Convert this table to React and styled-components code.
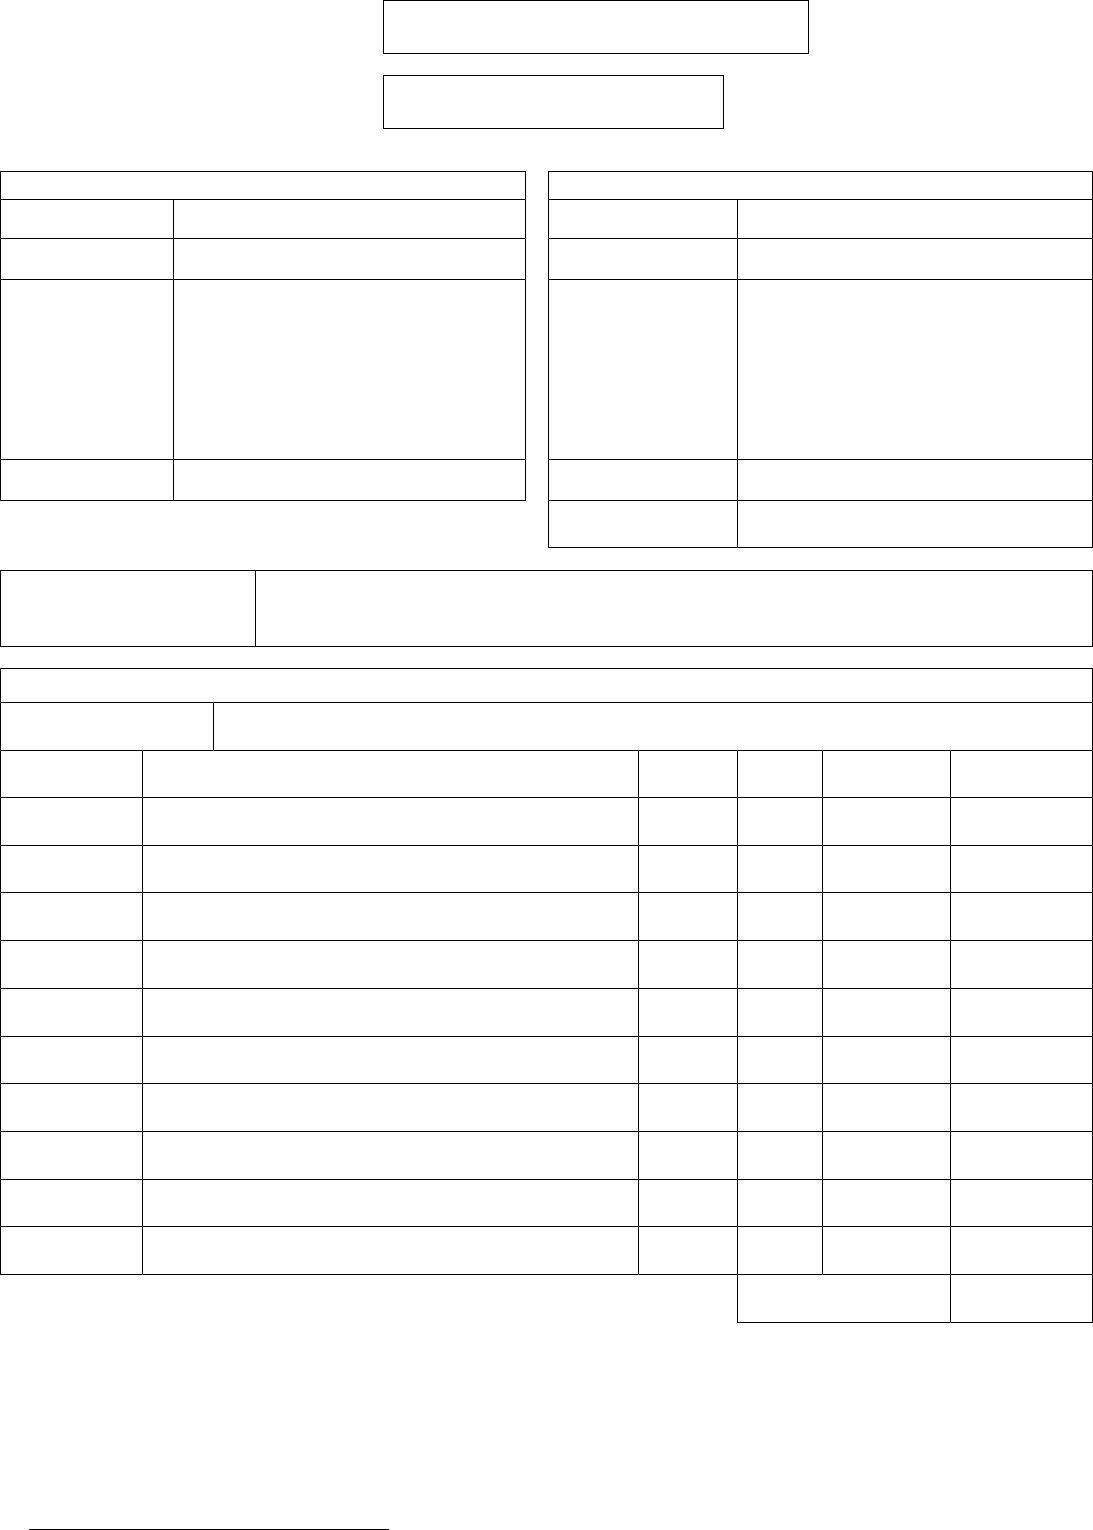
import React from "react";
import styled, { createGlobalStyle } from "styled-components";

const Global = createGlobalStyle`
  html, body { margin: 0; padding: 0; background: #fff; }
  body { font-family: "Liberation Sans", Arial, sans-serif; color: #000; }
  * { box-sizing: border-box; }
`;

const Page = styled.div`
  width: 1093px;
  height: 1530px;
  display: flex;
  flex-direction: column;
  background: #fff;
`;

const Heading = styled.div`
  display: flex;
  flex-direction: column;
  gap: 21px;
  padding-left: 383px;
`;

const TitleBox = styled.div`
  width: ${(p) => p.$width}px;
  height: 54px;
  border: 1px solid #000;
`;

/* generic ruled grid: outer top/left border, cells draw right/bottom */
const Ruled = styled.div`
  display: grid;
  border-top: 1px solid #000;
  border-left: 1px solid #000;
`;

const Cell = styled.div`
  border-right: 1px solid #000;
  border-bottom: 1px solid #000;
  grid-column: ${(p) => (p.$span ? "1 / -1" : "auto")};
`;

const Parties = styled.div`
  display: flex;
  align-items: flex-start;
  gap: 22px;
  margin-top: 42px;
`;

const PartyTable = styled(Ruled)`
  width: ${(p) => p.$width}px;
  grid-template-columns: ${(p) => p.$first}px 1fr;
  grid-template-rows: ${(p) => p.$rows};
`;

const NoteBox = styled(Ruled)`
  margin-top: 22px;
  width: 1093px;
  grid-template-columns: 255px 1fr;
  grid-template-rows: 76px;
`;

const ItemsHead = styled(Ruled)`
  margin-top: 21px;
  width: 1093px;
  grid-template-columns: 213px 1fr;
  grid-template-rows: 34px 48px;
`;

const ItemsBody = styled.div`
  display: grid;
  width: 1093px;
  border-left: 1px solid #000;
  grid-template-columns: 142px 496px 99px 85px 128px 142px;
`;

const ItemRow = styled.div`
  display: contents;
  & > div {
    height: ${(p) => p.$h}px;
  }
`;

const Totals = styled(Ruled)`
  margin-left: 737px;
  border-top: none;
  width: 356px;
  grid-template-columns: 213px 142px;
  grid-template-rows: 48px;
`;

const Footnote = styled.div`
  margin-top: 206px;
  margin-left: 29px;
  width: 360px;
  border-top: 1px solid #000;
`;

const itemHeights = [47, 48, 47, 48, 48, 48, 47, 48, 48, 47, 48];

export default function App() {
  const leftRows = "28px 39px 41px 180px 41px";
  const rightRows = "28px 39px 41px 180px 41px 47px";
  return (
    <>
      <Global />
      <Page>
        <Heading>
          <TitleBox $width={426} />
          <TitleBox $width={341} />
        </Heading>

        <Parties>
          <PartyTable $width={526} $first={173} $rows={leftRows}>
            <Cell $span />
            {Array.from({ length: 8 }).map((_, i) => (
              <Cell key={i} />
            ))}
          </PartyTable>
          <PartyTable $width={545} $first={189} $rows={rightRows}>
            <Cell $span />
            {Array.from({ length: 10 }).map((_, i) => (
              <Cell key={i} />
            ))}
          </PartyTable>
        </Parties>

        <NoteBox>
          <Cell />
          <Cell />
        </NoteBox>

        <ItemsHead>
          <Cell $span />
          <Cell />
          <Cell />
        </ItemsHead>

        <ItemsBody>
          {itemHeights.map((h, r) => (
            <ItemRow key={r} $h={h}>
              {Array.from({ length: 6 }).map((_, c) => (
                <Cell key={c} />
              ))}
            </ItemRow>
          ))}
        </ItemsBody>

        <Totals>
          <Cell style={{ borderTop: "none" }} />
          <Cell />
        </Totals>

        <Footnote />
      </Page>
    </>
  );
}
